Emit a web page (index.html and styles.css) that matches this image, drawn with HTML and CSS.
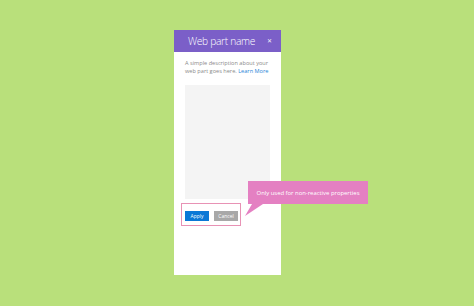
FILE: index.html
```html
<!DOCTYPE html>
<html lang="en">
<head>
  <meta charset="UTF-8" />
  <title>Web part panel</title>
  <link rel="stylesheet" href="styles.css">
</head>
<body>
  <div class="stage">
    <!-- Panel de propiedades -->
    <div class="panel">
      <div class="panel-header">
        <span class="panel-title">Web part name</span>
        <span class="panel-close">&#x2715;</span>
      </div>

      <div class="panel-content">
        <p class="panel-desc">
          A simple description about your web part goes here. <a class="learn-more" href="#">Learn More</a>
        </p>

        <div class="panel-body"></div>

        <!-- Botones (solo para propiedades no reactivas) -->
        <div class="panel-actions">
          <svg class="actions-frame" width="60" height="23" viewBox="0 0 60 23">
            <rect x="0.5" y="0.5" width="59" height="22" fill="none" stroke="#d0246a" stroke-width="1" stroke-dasharray="1 1" />
          </svg>
          <button class="btn btn-primary">Apply</button>
          <button class="btn btn-default">Cancel</button>
        </div>
      </div>
    </div>

    <!-- Nota -->
    <div class="callout">
      Only used for non-reactive properties
      <svg class="callout-tail" width="20" height="14" viewBox="0 0 20 14">
        <polygon points="7,0 18,0 0,12" fill="#e480c2" />
      </svg>
    </div>
  </div>
</body>
</html>
```

FILE: styles.css
```css
:root {
  --bg-page: #b9e07b;
  --purple: #7b5fc8;
  --pink: #e480c2;
  --blue: #0a78d6;
  --gray-btn: #a8a8a8;
  --gray-box: #f4f4f4;
  --text-secondary: #8a8a8a;
}

* {
  box-sizing: border-box;
}
body {
  margin: 0;
  background-color: var(--bg-page);
  font-family: "Open Sans", "Noto Sans", sans-serif;
}

.stage {
  position: relative;
  width: 474px;
  height: 306px;
  padding: 30px 0 0 174px;
}

/* Panel */
.panel {
  width: 107px;
  height: 245px;
  background-color: #ffffff;
  display: flex;
  flex-direction: column;
}
.panel-header {
  height: 22px;
  background-color: var(--purple);
  color: #ffffff;
  display: flex;
  align-items: center;
  justify-content: space-between;
  padding: 0 9px 0 14px;
}
.panel-title {
  font-size: 10.2px;
  font-weight: 300;
  letter-spacing: -0.3px;
}
.panel-close {
  font-size: 6px;
  opacity: 0.9;
}

.panel-content {
  padding: 7px 11px 0;
  display: flex;
  flex-direction: column;
}
.panel-desc {
  margin: 0;
  font-size: 5.6px;
  line-height: 8px;
  color: var(--text-secondary);
}
.learn-more {
  color: #2a86d8;
  text-decoration: none;
}

.panel-body {
  margin-top: 10px;
  height: 114px;
  background-color: var(--gray-box);
}

/* Marco punteado alrededor de los botones */
.panel-actions {
  position: relative;
  margin: 4px 0 0 -4px;
  width: 60px;
  height: 23px;
  display: flex;
  gap: 5px;
  padding: 8px 3px 5px 4px;
}
.actions-frame {
  position: absolute;
  left: 0;
  top: 0;
}
.btn {
  height: 10px;
  width: 24px;
  padding: 0;
  border: none;
  color: #ffffff;
  font-family: inherit;
  font-size: 5px;
  line-height: 10px;
}
.btn-primary {
  background-color: var(--blue);
}
.btn-default {
  background-color: var(--gray-btn);
}

/* Nota flotante */
.callout {
  position: absolute;
  left: 248px;
  top: 181px;
  width: 120px;
  height: 23px;
  background-color: var(--pink);
  color: #ffffff;
  font-size: 5.9px;
  display: flex;
  align-items: center;
  justify-content: center;
}
.callout-tail {
  position: absolute;
  left: -3px;
  top: 23px;
}
```
